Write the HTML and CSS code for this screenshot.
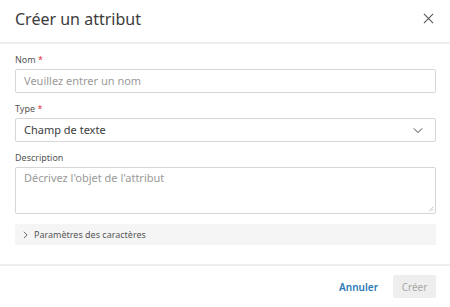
FILE: index.html
```html
<!DOCTYPE html>
<html>
  <head>
    <title>Créer un attribut</title>
    <link rel="stylesheet" href="styles.css">
  </head>
  <body>
    <div class="dialog">
      <div class="dialog-header">
        <h2>Créer un attribut</h2>
        <button class="close-button">
          <svg viewBox="0 0 12 12" xmlns="http://www.w3.org/2000/svg">
            <path d="M1 1L11 11M11 1L1 11" />
          </svg>
        </button>
      </div>

      <div class="dialog-body">
        <div class="field">
          <div class="field-label">Nom <span class="required">*</span></div>
          <div class="input placeholder">Veuillez entrer un nom</div>
        </div>

        <div class="field">
          <div class="field-label">Type <span class="required">*</span></div>
          <div class="input select">
            <span>Champ de texte</span>
            <svg class="chevron" viewBox="0 0 12 8" xmlns="http://www.w3.org/2000/svg">
              <path d="M1 1.5L6 6.5L11 1.5" />
            </svg>
          </div>
        </div>

        <div class="field">
          <div class="field-label">Description</div>
          <div class="input textarea placeholder">
            Décrivez l'objet de l'attribut
            <svg class="grip" viewBox="0 0 8 8" xmlns="http://www.w3.org/2000/svg">
              <path d="M7 1L1 7M7 4L4 7" />
            </svg>
          </div>
        </div>

        <div class="accordion">
          <svg class="arrow" viewBox="0 0 6 10" xmlns="http://www.w3.org/2000/svg">
            <path d="M1 1L5 5L1 9" />
          </svg>
          <span>Paramètres des caractères</span>
        </div>
      </div>

      <div class="dialog-footer">
        <button class="link-button">Annuler</button>
        <button class="primary-button" disabled>Créer</button>
      </div>
    </div>
  </body>
</html>
```

FILE: styles.css
```css
body {
  margin: 0;
  background-color: #ffffff;
  font-family: "Noto Sans", "Open Sans", Arial, sans-serif;
  color: #3c3c3c;
}
.dialog {
  width: 450px;
  height: 307px;
  display: flex;
  flex-direction: column;
}
.dialog-header {
  border-bottom: 2px solid #eeeeee;
  display: flex;
  align-items: center;
  justify-content: space-between;
  padding: 0 15px 0 15px;
  box-sizing: border-box;
  height: 44px;
}
h2 {
  margin: 0 0 4px 0;
  font-size: 16px;
  font-weight: 400;
  color: #3c3c3c;
}
.close-button {
  width: 12px;
  height: 12px;
  padding: 0;
  border: none;
  background: none;
  display: flex;
  margin-bottom: 4px;
}
.close-button svg {
  width: 11px;
  height: 11px;
  stroke: #555555;
  stroke-width: 1.2;
  fill: none;
}
.dialog-body {
  padding: 10px 14px 0 15px;
  flex: 1;
}
.field {
  margin-bottom: 10px;
}
.field-label {
  font-size: 9px;
  color: #555555;
  margin-bottom: 4px;
  height: 11px;
  line-height: 11px;
}
.required {
  color: #e0393e;
}
.input {
  height: 24px;
  box-sizing: border-box;
  border: 1px solid #d6d6d6;
  border-radius: 2px;
  padding: 0 8px;
  font-size: 11px;
  line-height: 22px;
  color: #3c3c3c;
}
.placeholder {
  color: #9a9a9a;
}
.select {
  display: flex;
  align-items: center;
  justify-content: space-between;
}
.chevron {
  width: 10px;
  height: 7px;
  stroke: #444444;
  stroke-width: 1.2;
  fill: none;
  margin-right: 4px;
}
.textarea {
  height: 47px;
  position: relative;
  line-height: 20px;
}
.grip {
  position: absolute;
  right: 1px;
  bottom: 1px;
  width: 6px;
  height: 6px;
  stroke: #aaaaaa;
  stroke-width: 0.8;
  fill: none;
}
.accordion {
  height: 21px;
  background-color: #f5f5f5;
  display: flex;
  align-items: center;
  padding-left: 8px;
  font-size: 9px;
  color: #555555;
}
.arrow {
  width: 5px;
  height: 8px;
  stroke: #555555;
  stroke-width: 1.1;
  fill: none;
  margin-right: 6px;
}
.dialog-footer {
  border-top: 2px solid #eeeeee;
  height: 41px;
  display: flex;
  align-items: center;
  justify-content: flex-end;
  padding: 0 14px 0 15px;
  gap: 15px;
}
.link-button {
  border: none;
  background: none;
  padding: 0;
  font-family: inherit;
  font-size: 10px;
  font-weight: 600;
  color: #2a7ab8;
}
.primary-button {
  width: 43px;
  height: 23px;
  border: none;
  border-radius: 2px;
  background-color: #eeeeee;
  color: #a8a8a8;
  font-family: inherit;
  font-size: 10px;
  padding: 0;
}
```
